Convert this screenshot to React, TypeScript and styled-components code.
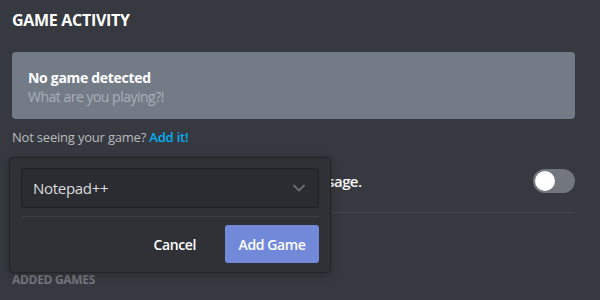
import React from "react";
import styled, { createGlobalStyle } from "styled-components";

const GlobalStyle = createGlobalStyle`
  html, body {
    margin: 0;
    padding: 0;
    background: #36393f;
    overflow: hidden;
  }
  body {
    font-family: "Open Sans", "Noto Sans", sans-serif;
  }
`;

const Page = styled.div`
  position: relative;
  width: 600px;
  height: 300px;
  padding: 0 25px 0 12px;
  box-sizing: border-box;
  background: #36393f;
`;

const Title = styled.h2`
  margin: 0;
  padding-top: 10px;
  font-size: 16px;
  line-height: 20px;
  font-weight: 700;
  color: #ffffff;
  text-transform: uppercase;
  letter-spacing: -0.3px;
`;

const GameCard = styled.div`
  margin-top: 22px;
  height: 67px;
  box-sizing: border-box;
  padding: 16px 16px 0;
  border-radius: 4px;
  background: #737b87;
`;

const CardTitle = styled.div`
  font-size: 14px;
  line-height: 19px;
  font-weight: 700;
  color: #ffffff;
  letter-spacing: -0.3px;
`;

const CardSub = styled.div`
  font-size: 14px;
  line-height: 19px;
  color: #a9afb8;
  letter-spacing: -0.5px;
`;

const Note = styled.div`
  margin-top: 9px;
  font-size: 13px;
  line-height: 18px;
  color: #b9bbbe;
  letter-spacing: -0.2px;
`;

const Link = styled.a`
  color: #00b0f4;
  font-weight: 600;
  cursor: pointer;
`;

const SettingRow = styled.div`
  display: flex;
  align-items: center;
  justify-content: space-between;
  margin-top: 23px;
  padding-bottom: 19px;
  border-bottom: 1px solid #42454b;
`;

const SettingLabel = styled.div`
  font-size: 15px;
  line-height: 20px;
  font-weight: 600;
  color: #f6f6f7;
  letter-spacing: -0.6px;
  white-space: nowrap;
`;

const Toggle = styled.div<{ $on?: boolean }>`
  position: relative;
  width: 42px;
  height: 24px;
  border-radius: 12px;
  background: ${(p) => (p.$on ? "#43b581" : "#72767d")};
  flex-shrink: 0;
`;

const Knob = styled.span`
  position: absolute;
  top: 2px;
  left: 2px;
  width: 20px;
  height: 20px;
  border-radius: 50%;
  background: #ffffff;
`;

const SubHeader = styled.h3`
  margin: 0;
  margin-top: 59px;
  font-size: 12px;
  line-height: 16px;
  font-weight: 700;
  color: #72767d;
  text-transform: uppercase;
  letter-spacing: -0.3px;
`;

const Popout = styled.div`
  position: absolute;
  left: 9px;
  top: 157px;
  width: 322px;
  height: 116px;
  box-sizing: border-box;
  padding: 10px 11px 0;
  background: #2f3136;
  border: 1px solid #232428;
  border-radius: 4px;
  box-shadow: 0 2px 8px rgba(0, 0, 0, 0.25);
`;

const Select = styled.div`
  display: flex;
  align-items: center;
  justify-content: space-between;
  height: 40px;
  box-sizing: border-box;
  padding: 0 13px 0 11px;
  background: #2a2c31;
  border: 1px solid #1f2023;
  border-radius: 3px;
`;

const SelectValue = styled.span`
  font-size: 15px;
  color: #dcddde;
  letter-spacing: -0.3px;
`;

const Divider = styled.div`
  height: 1px;
  margin-top: 8px;
  background: #3b3d42;
`;

const Actions = styled.div`
  display: flex;
  justify-content: flex-end;
  align-items: center;
  gap: 29px;
  margin-top: 8px;
`;

const Button = styled.button<{ $primary?: boolean }>`
  height: 38px;
  width: ${(p) => (p.$primary ? "94px" : "auto")};
  padding: 0;
  border: none;
  border-radius: 3px;
  background: ${(p) => (p.$primary ? "#7289da" : "transparent")};
  color: #ffffff;
  font-family: inherit;
  font-size: 14px;
  font-weight: 600;
  letter-spacing: -0.4px;
  cursor: pointer;
`;

const Chevron = () => (
  <svg width="12" height="8" viewBox="0 0 12 8" fill="none">
    <path d="M1 1.5l5 5 5-5" stroke="#6a6d73" strokeWidth="1.8" strokeLinecap="round" strokeLinejoin="round" />
  </svg>
);

export default function App() {
  return (
    <Page>
      <GlobalStyle />
      <Title>Game Activity</Title>
      <GameCard>
        <CardTitle>No game detected</CardTitle>
        <CardSub>What are you playing?!</CardSub>
      </GameCard>
      <Note>
        Not seeing your game? <Link>Add it!</Link>
      </Note>
      <SettingRow>
        <SettingLabel>Display currently running game as a status message.</SettingLabel>
        <Toggle>
          <Knob />
        </Toggle>
      </SettingRow>
      <SubHeader>Added Games</SubHeader>

      <Popout>
        <Select>
          <SelectValue>Notepad++</SelectValue>
          <Chevron />
        </Select>
        <Divider />
        <Actions>
          <Button>Cancel</Button>
          <Button $primary>Add Game</Button>
        </Actions>
      </Popout>
    </Page>
  );
}
